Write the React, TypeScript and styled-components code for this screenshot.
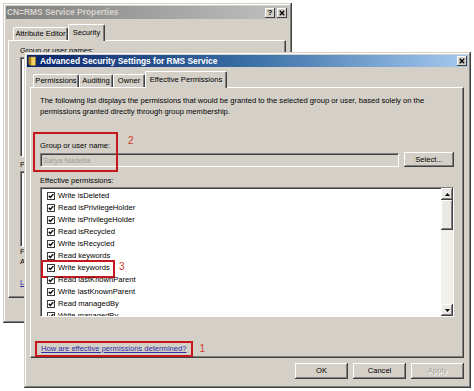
import React from "react";
import styled, { createGlobalStyle, css } from "styled-components";

const FACE = "#d4d0c8";
const SHADOW = "#808080";
const DARK = "#404040";
const MARK = "#c8161d";
const MARK_TEXT = "#d23a2a";

const GlobalStyle = createGlobalStyle`
  html, body {
    margin: 0;
    padding: 0;
    background: #ffffff;
  }
  body {
    font-family: "Liberation Sans", Arial, sans-serif;
    font-size: 7.6px;
    line-height: 10px;
    color: #000;
  }
  #root {
    width: 474px;
    height: 391px;
  }
`;

const raisedEdge = css`
  box-shadow: inset -1px -1px ${DARK}, inset 1px 1px #ffffff,
    inset -2px -2px ${SHADOW};
`;

const Desktop = styled.div`
  position: relative;
  width: 474px;
  height: 391px;
  overflow: hidden;
  background: #ffffff;
`;

const Window = styled.div<{ $x: number; $y: number; $w: number; $h: number }>`
  position: absolute;
  left: ${(p) => p.$x}px;
  top: ${(p) => p.$y}px;
  width: ${(p) => p.$w}px;
  height: ${(p) => p.$h}px;
  box-sizing: border-box;
  padding: 3px;
  display: flex;
  flex-direction: column;
  background: ${FACE};
  box-shadow: inset -1px -1px ${DARK}, inset 1px 1px ${FACE},
    inset -2px -2px ${SHADOW}, inset 2px 2px #ffffff;
`;

const TitleBar = styled.div<{ $active?: boolean; $h: number }>`
  flex: none;
  height: ${(p) => p.$h}px;
  display: flex;
  align-items: center;
  gap: 4px;
  padding: 0 ${(p) => (p.$active ? 1 : 2)}px 0 1px;
  background: ${(p) =>
    p.$active
      ? "linear-gradient(90deg, #0a246a 0%, #3a6ea5 50%, #a6caf0 100%)"
      : "linear-gradient(90deg, #808080 0%, #c0c0c0 100%)"};
  color: ${(p) => (p.$active ? "#ffffff" : "#d8d4cc")};
  font-size: 8.4px;
  font-weight: bold;
  line-height: ${(p) => p.$h}px;
  white-space: nowrap;
`;

const TitleText = styled.span`
  flex: 1;
`;

const CaptionButtons = styled.div`
  display: flex;
  gap: 2px;
`;

const CaptionButton = styled.div`
  width: 10px;
  height: 10px;
  box-sizing: border-box;
  display: flex;
  align-items: center;
  justify-content: center;
  background: ${FACE};
  box-shadow: inset -1px -1px ${DARK}, inset 1px 1px #ffffff;
  color: #000;
  font-size: 8px;
  font-weight: bold;
  line-height: 10px;
`;

const TabRow = styled.div<{ $top: number; $indent: number }>`
  flex: none;
  display: flex;
  align-items: flex-end;
  height: 16px;
  margin-top: ${(p) => p.$top}px;
  padding-left: ${(p) => p.$indent}px;
  position: relative;
  z-index: 1;
`;

const Tab = styled.div<{ $w: number; $active?: boolean }>`
  width: ${(p) => p.$w}px;
  height: ${(p) => (p.$active ? 17 : 13)}px;
  margin-bottom: ${(p) => (p.$active ? -1 : 0)}px;
  box-sizing: border-box;
  display: flex;
  align-items: center;
  justify-content: center;
  background: ${FACE};
  border-top: 1px solid #ffffff;
  border-left: 1px solid #ffffff;
  border-right: 1px solid ${DARK};
  border-radius: 2px 2px 0 0;
  box-shadow: inset -1px 0 ${SHADOW};
  white-space: nowrap;
`;

const TabPanel = styled.div<{ $h: number; $ml: number; $mr: number }>`
  flex: none;
  height: ${(p) => p.$h}px;
  margin: 0 ${(p) => p.$mr}px 0 ${(p) => p.$ml}px;
  box-sizing: border-box;
  border: 1px solid;
  border-color: #ffffff ${DARK} ${DARK} #ffffff;
  box-shadow: inset -1px -1px ${SHADOW};
  display: flex;
  flex-direction: column;
  align-items: flex-start;
  position: relative;
`;

const BackPanel = styled(TabPanel)`
  padding: 5px 11px 0 11px;
`;

const FrontPanel = styled(TabPanel)`
  padding: 7px 9px 0 9px;
`;

const Label = styled.div<{ $gap?: number }>`
  margin-top: ${(p) => p.$gap ?? 0}px;
  line-height: 10px;
  white-space: nowrap;
`;

const WhiteBox = styled.div<{ $h: number; $gap?: number }>`
  align-self: stretch;
  height: ${(p) => p.$h}px;
  margin-top: ${(p) => p.$gap ?? 1}px;
  box-sizing: border-box;
  background: #ffffff;
  border: 1px solid;
  border-color: ${SHADOW} #ffffff #ffffff ${SHADOW};
  box-shadow: inset 1px 1px ${DARK};
`;

const BackLink = styled.a`
  margin-top: 11px;
  line-height: 10px;
  color: #2e2ea6;
  text-decoration: underline;
  white-space: nowrap;
`;

const Description = styled.p`
  margin: 0;
  line-height: 11px;
  white-space: nowrap;
`;

const GroupSection = styled.div`
  position: relative;
  align-self: stretch;
  margin-top: 24px;
`;

const GroupMark = styled.span`
  position: absolute;
  left: -7px;
  top: -9px;
  width: 85px;
  height: 40px;
  box-sizing: border-box;
  border: 2px solid ${MARK};
  pointer-events: none;
`;

const MarkNum = styled.span<{ $x: number; $y: number }>`
  position: absolute;
  left: ${(p) => p.$x}px;
  top: ${(p) => p.$y}px;
  color: ${MARK_TEXT};
  font-size: 10px;
  line-height: 10px;
`;

const FieldRow = styled.div`
  display: flex;
  align-items: center;
  gap: 5px;
  margin-top: 1px;
`;

const NameField = styled.div`
  flex: 1;
  height: 14px;
  box-sizing: border-box;
  padding: 0 2px;
  line-height: 14px;
  background: ${FACE};
  border: 1px solid;
  border-color: ${SHADOW} #ffffff #ffffff ${SHADOW};
  box-shadow: inset 1px 1px ${DARK};
  color: #a19e97;
`;

const PushButton = styled.button<{ $w: number; $h?: number }>`
  width: ${(p) => p.$w}px;
  height: ${(p) => p.$h ?? 16}px;
  box-sizing: border-box;
  padding: 0;
  border: none;
  display: flex;
  align-items: center;
  justify-content: center;
  background: ${FACE};
  ${raisedEdge};
  font: inherit;
  line-height: 10px;
  color: #000;
  &:disabled {
    color: #a3a09a;
    text-shadow: 1px 1px #ffffff;
  }
`;

const PermList = styled.div`
  align-self: stretch;
  height: 130px;
  margin-top: 1px;
  box-sizing: border-box;
  display: flex;
  background: #ffffff;
  border: 1px solid;
  border-color: ${SHADOW} #ffffff #ffffff ${SHADOW};
  box-shadow: inset 1px 1px ${DARK};
  overflow: hidden;
`;

const ListItems = styled.ul`
  flex: 1;
  margin: 0;
  padding: 2px 0 0 0;
  list-style: none;
`;

const Item = styled.li<{ $marked?: boolean }>`
  position: relative;
  display: flex;
  align-items: center;
  gap: 3px;
  height: 12px;
  padding-left: 6px;
  white-space: nowrap;
  ${(p) =>
    p.$marked &&
    css`
      &::after {
        content: "";
        position: absolute;
        left: 0;
        top: -2px;
        width: 74px;
        height: 18px;
        box-sizing: border-box;
        border: 2px solid ${MARK};
      }
    `}
`;

const ScrollBar = styled.div`
  flex: none;
  width: 12px;
  display: flex;
  flex-direction: column;
  background: #f1f0eb;
`;

const ScrollArrow = styled.div`
  flex: none;
  height: 12px;
  box-sizing: border-box;
  display: flex;
  align-items: center;
  justify-content: center;
  background: #ebe9e3;
  ${raisedEdge};
`;

const ScrollThumb = styled.div`
  flex: none;
  height: 30px;
  box-sizing: border-box;
  background: #ebe9e3;
  ${raisedEdge};
`;

const ScrollTrack = styled.div`
  flex: 1;
`;

const HelpLine = styled.div`
  display: flex;
  align-items: center;
  margin-top: 27px;
  line-height: 10px;
`;

const HelpLink = styled.a`
  position: relative;
  margin-left: 1px;
  color: #2e2ea6;
  text-decoration: underline;
  white-space: nowrap;
  &::after {
    content: "";
    position: absolute;
    left: -6px;
    right: -7px;
    top: -3px;
    bottom: -3px;
    border: 2px solid ${MARK};
  }
`;

const InlineNum = styled.span`
  margin-left: 13px;
  color: ${MARK_TEXT};
  font-size: 10px;
  line-height: 10px;
`;

const ButtonRow = styled.div`
  display: flex;
  justify-content: flex-end;
  gap: 5px;
  margin: 5px 4px 0 0;
`;

const CheckBox = () => (
  <svg width="8" height="8" viewBox="0 0 8 8">
    <rect x="0.5" y="0.5" width="7" height="7" fill="#ffffff" stroke="#3c3c3c" />
    <path d="M1.8 3.8 L3.3 5.4 L6.3 2.1" fill="none" stroke="#000" strokeWidth="1.4" />
  </svg>
);

const CloseGlyph = () => (
  <svg width="6" height="6" viewBox="0 0 6 6">
    <path d="M0.8 0.8 L5.2 5.2 M5.2 0.8 L0.8 5.2" stroke="#000" strokeWidth="1.4" />
  </svg>
);

const FolderIcon = () => (
  <svg width="8" height="10" viewBox="0 0 8 10">
    <path d="M0.5 1.5 L3 0.5 L3 9.5 L0.5 8.5 Z" fill="#a97d12" />
    <rect x="3" y="1" width="4.5" height="8.5" fill="#f4d060" stroke="#b08a20" strokeWidth="0.6" />
  </svg>
);

const Arrow = ({ up }: { up?: boolean }) => (
  <svg width="5" height="3" viewBox="0 0 5 3">
    <path d={up ? "M0 3 L2.5 0 L5 3 Z" : "M0 0 L5 0 L2.5 3 Z"} fill="#000" />
  </svg>
);

const permissions = [
  "Write isDeleted",
  "Read isPrivilegeHolder",
  "Write isPrivilegeHolder",
  "Read isRecycled",
  "Write isRecycled",
  "Read keywords",
  "Write keywords",
  "Read lastKnownParent",
  "Write lastKnownParent",
  "Read managedBy",
  "Write managedBy",
];

const App: React.FC = () => {
  return (
    <Desktop>
      <GlobalStyle />
      <Window $x={3} $y={3} $w={289} $h={320}>
        <TitleBar $h={13}>
          <TitleText>CN=RMS Service Properties</TitleText>
          <CaptionButtons>
            <CaptionButton>?</CaptionButton>
            <CaptionButton>
              <CloseGlyph />
            </CaptionButton>
          </CaptionButtons>
        </TitleBar>
        <TabRow $top={5} $indent={7}>
          <Tab $w={55}>Attribute Editor</Tab>
          <Tab $w={37} $active>
            Security
          </Tab>
        </TabRow>
        <BackPanel $h={258} $ml={2} $mr={3}>
          <Label>Group or user names:</Label>
          <WhiteBox $h={100} />
          <Label $gap={3}>Permissions for Satya Nadella</Label>
          <WhiteBox $h={76} />
          <Label>
            For special permissions or advanced settings, click
            <br />
            Advanced.
          </Label>
          <BackLink>Learn about access control and permissions</BackLink>
        </BackPanel>
      </Window>

      <Window $x={24} $y={52} $w={447} $h={336}>
        <TitleBar $h={12} $active>
          <FolderIcon />
          <TitleText>Advanced Security Settings for RMS Service</TitleText>
          <CaptionButton>
            <CloseGlyph />
          </CaptionButton>
        </TitleBar>
        <TabRow $top={4} $indent={6}>
          <Tab $w={46}>Permissions</Tab>
          <Tab $w={34}>Auditing</Tab>
          <Tab $w={32}>Owner</Tab>
          <Tab $w={82} $active>
            Effective Permissions
          </Tab>
        </TabRow>
        <FrontPanel $h={271} $ml={3} $mr={4}>
          <Description>
            The following list displays the permissions that would be granted to the selected group or user, based solely on the
            <br />
            permissions granted directly through group membership.
          </Description>
          <GroupSection>
            <Label>Group or user name:</Label>
            <FieldRow>
              <NameField>Satya Nadella</NameField>
              <PushButton $w={50} $h={15}>
                Select...
              </PushButton>
            </FieldRow>
            <GroupMark />
            <MarkNum $x={88} $y={-5}>
              2
            </MarkNum>
          </GroupSection>
          <Label $gap={9}>Effective permissions:</Label>
          <PermList>
            <ListItems>
              {permissions.map((name) => (
                <Item key={name} $marked={name === "Write keywords"}>
                  <CheckBox />
                  <span>{name}</span>
                  {name === "Write keywords" && (
                    <MarkNum $x={78} $y={0}>
                      3
                    </MarkNum>
                  )}
                </Item>
              ))}
            </ListItems>
            <ScrollBar>
              <ScrollArrow>
                <Arrow up />
              </ScrollArrow>
              <ScrollThumb />
              <ScrollTrack />
              <ScrollArrow>
                <Arrow />
              </ScrollArrow>
            </ScrollBar>
          </PermList>
          <HelpLine>
            <HelpLink>How are effective permissions determined?</HelpLink>
            <InlineNum>1</InlineNum>
          </HelpLine>
        </FrontPanel>
        <ButtonRow>
          <PushButton $w={53}>OK</PushButton>
          <PushButton $w={53}>Cancel</PushButton>
          <PushButton $w={53} disabled>
            Apply
          </PushButton>
        </ButtonRow>
      </Window>
    </Desktop>
  );
};

export default App;
